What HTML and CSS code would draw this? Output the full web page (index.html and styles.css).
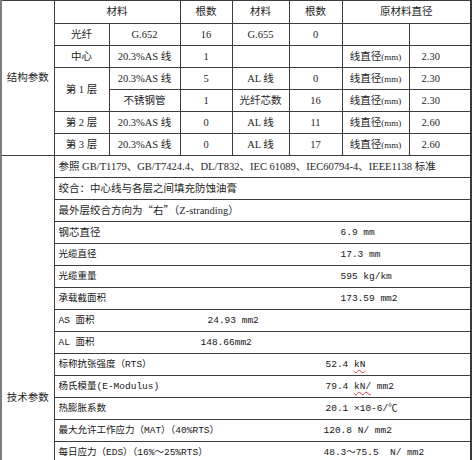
FILE: index.html
```html
<!DOCTYPE html>
<html lang="zh-CN">
<head>
<meta charset="utf-8">
<title>OPGW 参数</title>
<link rel="stylesheet" href="styles.css">
</head>
<body>
<table class="spec">
  <colgroup>
    <col class="w1"><col class="w2"><col class="w3"><col class="w4">
    <col class="w5"><col class="w6"><col class="w7"><col class="w8">
  </colgroup>
  <tbody>
    <tr class="hrow">
      <td rowspan="7" class="side side-top">结构参数</td>
      <td colspan="2">材料</td>
      <td>根数</td>
      <td>材料</td>
      <td>根数</td>
      <td colspan="2">原材料直径</td>
    </tr>
    <tr>
      <td>光纤</td>
      <td>G.652</td>
      <td>16</td>
      <td>G.655</td>
      <td>0</td>
      <td></td>
      <td></td>
    </tr>
    <tr>
      <td>中心</td>
      <td>20.3%AS 线</td>
      <td>1</td>
      <td></td>
      <td></td>
      <td>线直径<span class="mm">(mm)</span></td>
      <td class="num">2.30</td>
    </tr>
    <tr>
      <td rowspan="2">第 1 层</td>
      <td>20.3%AS 线</td>
      <td>5</td>
      <td>AL 线</td>
      <td>0</td>
      <td>线直径<span class="mm">(mm)</span></td>
      <td class="num">2.30</td>
    </tr>
    <tr>
      <td>不锈钢管</td>
      <td>1</td>
      <td>光纤芯数</td>
      <td>16</td>
      <td>线直径<span class="mm">(mm)</span></td>
      <td class="num">2.30</td>
    </tr>
    <tr>
      <td>第 2 层</td>
      <td>20.3%AS 线</td>
      <td>0</td>
      <td>AL 线</td>
      <td>11</td>
      <td>线直径<span class="mm">(mm)</span></td>
      <td class="num">2.60</td>
    </tr>
    <tr>
      <td>第 3 层</td>
      <td>20.3%AS 线</td>
      <td>0</td>
      <td>AL 线</td>
      <td>17</td>
      <td>线直径<span class="mm">(mm)</span></td>
      <td class="num">2.60</td>
    </tr>

    <tr>
      <td rowspan="14" class="side side-tech">技术参数</td>
      <td colspan="7" class="t">参照 GB/T1179、GB/T7424.4、DL/T832、IEC 61089、IEC60794-4、IEEE1138 标准</td>
    </tr>
    <tr><td colspan="7" class="t">绞合：中心线与各层之间填充防蚀油膏</td></tr>
    <tr><td colspan="7" class="t">最外层绞合方向为<span class="cjk">“右”（</span>Z-stranding<span class="cjk">）</span></td></tr>
    <tr><td colspan="7" class="t"><div class="line a"><span>钢芯直径</span><span class="mono">6.9 mm</span></div></td></tr>
    <tr><td colspan="7" class="t mono"><div class="line a"><span>光缆直径</span><span>17.3 mm</span></div></td></tr>
    <tr><td colspan="7" class="t mono"><div class="line a"><span>光缆重量</span><span>595 kg/km</span></div></td></tr>
    <tr><td colspan="7" class="t mono"><div class="line a"><span>承载截面积</span><span>173.59 mm2</span></div></td></tr>
    <tr><td colspan="7" class="t mono"><div class="line c"><span>AS 面积</span><span>24.93 mm2</span></div></td></tr>
    <tr><td colspan="7" class="t mono"><div class="line d"><span>AL 面积</span><span>148.66mm2</span></div></td></tr>
    <tr><td colspan="7" class="t mono"><div class="line b"><span>标称抗张强度（RTS）</span><span>52.4 <span class="sq">kN</span></span></div></td></tr>
    <tr><td colspan="7" class="t mono"><div class="line b"><span>杨氏模量(E-Modulus)</span><span>79.4 <span class="sq">kN/</span> mm2</span></div></td></tr>
    <tr><td colspan="7" class="t mono"><div class="line b"><span>热膨胀系数</span><span>20.1 ×10-6/℃</span></div></td></tr>
    <tr><td colspan="7" class="t mono"><div class="line e"><span>最大允许工作应力（MAT）（40%RTS）</span><span>120.8 N/ mm2</span></div></td></tr>
    <tr><td colspan="7" class="t mono"><div class="line e"><span>每日应力（EDS）（16%～25%RTS）</span><span>48.3～75.5&nbsp; N/ mm2</span></div></td></tr>
  </tbody>
</table>
</body>
</html>
```
FILE: styles.css
```css
html, body {
  margin: 0;
  padding: 0;
  background: #ffffff;
  overflow: hidden;
}

.spec {
  border-collapse: collapse;
  table-layout: fixed;
  width: 472px;
  font-family: "Liberation Serif", "Noto Sans CJK SC", serif;
  font-size: 10.5px;
  color: #1e1e1e;
  border-top: 1px solid #8a8a8a;
  border-left: 2px solid #7d7d7d;
  border-right: 2px solid #3a3a3a;
}

.w1 { width: 53px; }
.w2 { width: 55px; }
.w3 { width: 71px; }
.w4 { width: 52px; }
.w5 { width: 57px; }
.w6 { width: 53px; }
.w7 { width: 67px; }
.w8 { width: 62px; }

.spec td {
  border: 1px solid #3c3c3c;
  height: 21px;
  padding: 0;
  text-align: center;
  vertical-align: middle;
  line-height: 12px;
  white-space: nowrap;
  overflow: hidden;
}

.spec .hrow td {
  height: 22px;
}

.spec td.side {
  border-left: none;
}

.spec td.side-tech {
  vertical-align: top;
  padding-top: 236px;
}

.spec td.num {
  padding-right: 18px;
}

.mm {
  font-size: 9px;
}

.cjk {
  font-family: "Noto Sans CJK SC", sans-serif;
}

.spec td.t {
  text-align: left;
  padding-left: 4px;
}

.mono {
  font-family: "Liberation Mono", "Noto Sans CJK SC", monospace;
  font-size: 9.5px;
  color: #151515;
}

.line {
  display: grid;
  align-items: center;
}

.line.a { grid-template-columns: 282px 1fr; }
.line.b { grid-template-columns: 267px 1fr; }
.line.e { grid-template-columns: 265px 1fr; }
.line.c { grid-template-columns: 149px 1fr; }
.line.d { grid-template-columns: 142px 1fr; }

.sq {
  text-decoration: underline wavy #d23a3a;
  text-decoration-thickness: 1px;
  text-underline-offset: 2px;
}
```
